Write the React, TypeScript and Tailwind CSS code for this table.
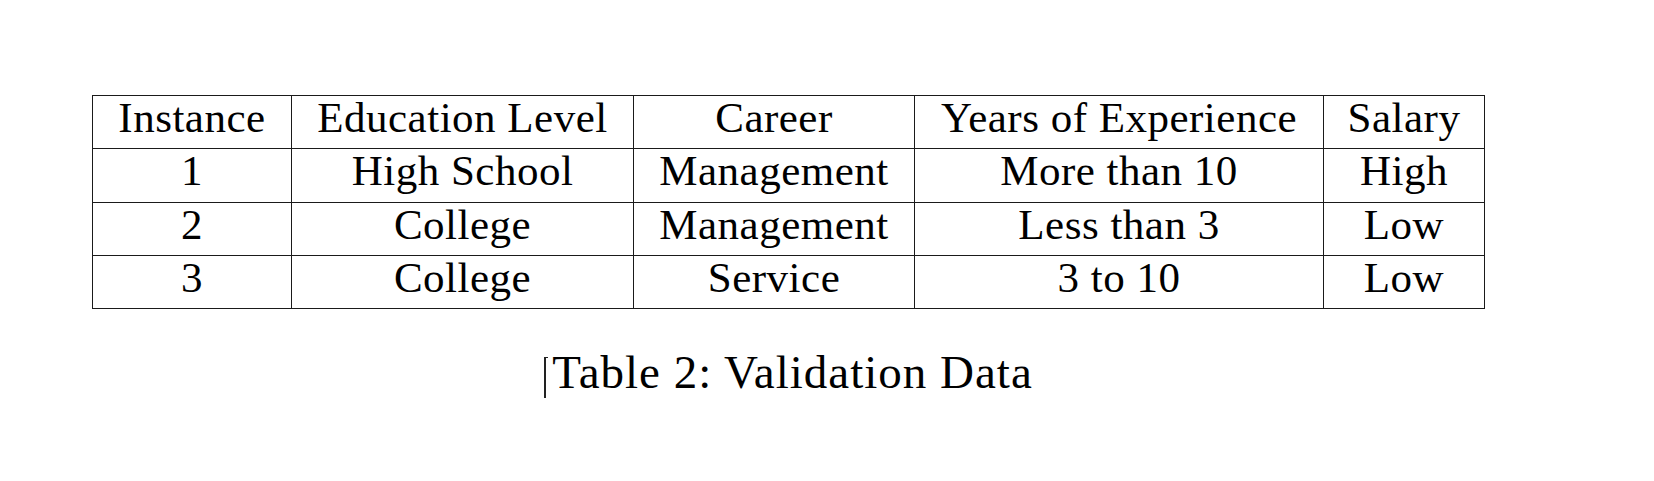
import React from "react";

const header = ["Instance", "Education Level", "Career", "Years of Experience", "Salary"];

const rows = [
  ["1", "High School", "Management", "More than 10", "High"],
  ["2", "College", "Management", "Less than 3", "Low"],
  ["3", "College", "Service", "3 to 10", "Low"],
];

export default function App() {
  return (
    <div
      className="w-[1654px] h-[481px] bg-white text-black pl-[92px] pt-[95px]"
      style={{ fontFamily: '"Liberation Serif", "Times New Roman", serif' }}
    >
      <div className="w-[1393px]">
        <div className="grid grid-cols-[199px_342px_281px_409px_161px] border-l border-t border-[#1a1a1a] w-[1393px]">
          {[header, ...rows].map((row, r) =>
            row.map((cell, c) => (
              <div
                key={r + "-" + c}
                className={
                  (r === 1 ? "h-[54px] " : "h-[53px] ") +
                  "border-r border-b border-[#1a1a1a] text-center text-[43px] leading-[43px] tracking-[0.5px] whitespace-nowrap"
                }
              >
                {cell}
              </div>
            ))
          )}
        </div>

        <div className="flex justify-center mt-[40px]">
          <div className="flex items-start">
            {/* text cursor mark before the caption */}
            <span className="mt-[8px] w-[4px] h-[41px] border-l-2 border-t border-[#222]" />
            <span className="ml-[4px] text-[47px] leading-[47px] tracking-[1px] whitespace-nowrap">
              Table 2: Validation Data
            </span>
          </div>
        </div>
      </div>
    </div>
  );
}
